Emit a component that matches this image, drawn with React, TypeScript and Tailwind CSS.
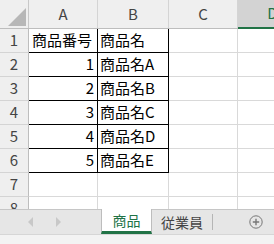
/**
 * Spreadsheet view
 * A small Excel-like sheet with a product table and sheet tabs
 */

// =============================================================================
// Data
// =============================================================================

const COLUMNS = ["A", "B", "C", "D"];

const ROWS: { id: string; name: string }[] = [
  { id: "1", name: "商品名A" },
  { id: "2", name: "商品名B" },
  { id: "3", name: "商品名C" },
  { id: "4", name: "商品名D" },
  { id: "5", name: "商品名E" },
];

const FONT = {
  fontFamily: '"Noto Sans CJK JP", "Liberation Sans", sans-serif',
};

// =============================================================================
// Grid
// =============================================================================

function ColumnHeader() {
  return (
    <div className="flex h-[29px] border-b border-[#bdbdbd] bg-[#efefef]">
      {/* Select-all corner */}
      <div className="relative w-[29px] shrink-0 border-r border-[#c8c8c8]">
        <svg className="absolute left-[8px] top-[8px]" width="18" height="18" viewBox="0 0 18 18">
          <polygon points="18,0 18,18 0,18" fill="#b7b7b7" />
        </svg>
      </div>
      {COLUMNS.map((col, i) => (
        <div
          key={col}
          className={`shrink-0 flex items-center justify-center text-[15px] ${
            i === 1 ? "w-[71px]" : "w-[69px]"
          } ${
            col === "D"
              ? "bg-[#d3d3d3] border-b-2 border-[#217346] text-[#217346] -mb-px"
              : "border-r border-[#d4d4d4] text-[#444]"
          }`}
        >
          {col}
        </div>
      ))}
    </div>
  );
}

interface RowProps {
  num: number;
  a?: string;
  b?: string;
  boxed?: boolean;
  alignA?: "left" | "right";
}

function SheetRow({ num, a, b, boxed = false, alignA = "right" }: RowProps) {
  const edge = boxed ? "border-black" : "border-[#d9d9d9]";
  return (
    <div className="flex h-[24px]">
      <div className="w-[29px] shrink-0 flex items-center justify-center bg-[#efefef] border-r border-b border-r-[#bdbdbd] border-b-[#d4d4d4] text-[15px] text-[#444]">
        {num}
      </div>
      <div
        className={`w-[69px] shrink-0 flex items-center px-[3px] text-[15px] text-black border-b ${edge} ${
          boxed ? "border-r border-r-black" : "border-r border-r-[#d9d9d9]"
        } ${alignA === "left" ? "justify-start" : "justify-end"}`}
      >
        {a}
      </div>
      <div
        className={`w-[71px] shrink-0 flex items-center px-[2px] text-[15px] text-black border-b ${edge} ${
          boxed ? "border-r border-r-black" : "border-r border-r-[#d9d9d9]"
        }`}
      >
        {b}
      </div>
      <div className="w-[69px] shrink-0 border-r border-b border-[#d9d9d9]" />
      <div className="w-[69px] shrink-0 border-b border-[#d9d9d9]" />
    </div>
  );
}

function Grid() {
  return (
    <div className="flex-1 overflow-hidden bg-white">
      <ColumnHeader />
      <SheetRow num={1} a="商品番号" b="商品名" boxed alignA="left" />
      {ROWS.map((row, i) => (
        <SheetRow key={row.id} num={i + 2} a={row.id} b={row.name} boxed />
      ))}
      <SheetRow num={7} />
      <SheetRow num={8} />
    </div>
  );
}

// =============================================================================
// Sheet tabs
// =============================================================================

function TabBar() {
  return (
    <div className="h-[35px] shrink-0 flex flex-col bg-[#e6e6e6]">
      <div className="h-[25px] flex border-t border-[#c6c6c6]">
        {/* Scroll arrows */}
        <div className="w-[101px] shrink-0 flex items-center gap-[22px] pl-[28px]">
          <svg width="6" height="10" viewBox="0 0 6 10">
            <polygon points="5,0 5,10 0,5" fill="#c8c8c8" />
          </svg>
          <svg width="6" height="10" viewBox="0 0 6 10">
            <polygon points="0,0 0,10 5,5" fill="#c8c8c8" />
          </svg>
        </div>
        {/* Active tab */}
        <div className="-mt-px w-[51px] shrink-0 flex items-center justify-center bg-white border-l border-r border-[#bdbdbd] border-b-[3px] border-b-[#217346] text-[14px] text-[#217346]">
          商品
        </div>
        <div className="w-[60px] shrink-0 flex items-center justify-center text-[14px] text-[#444] pt-[1px]">
          従業員
        </div>
        <div className="my-[4px] w-px bg-[#b5b5b5]" />
        <div className="flex-1 flex items-center pl-[36px]">
          <svg width="14" height="14" viewBox="0 0 14 14">
            <circle cx="7" cy="7" r="6.2" fill="none" stroke="#777" strokeWidth="1" />
            <path d="M7 3.8v6.4M3.8 7h6.4" stroke="#777" strokeWidth="1.4" />
          </svg>
        </div>
      </div>
      <div className="flex-1 bg-[#f3f3f3] border-t border-[#d6d6d6]" />
    </div>
  );
}

// =============================================================================
// App
// =============================================================================

export default function App() {
  return (
    <div className="w-[274px] h-[244px] flex flex-col overflow-hidden bg-white" style={FONT}>
      <Grid />
      <TabBar />
    </div>
  );
}
